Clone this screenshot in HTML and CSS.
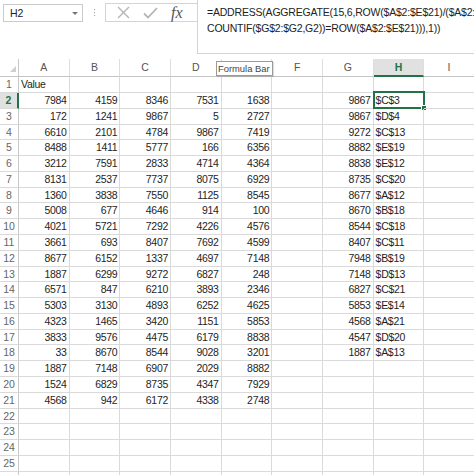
FILE: index.html
```html
<!DOCTYPE html>
<html>
<head>
<meta charset="utf-8">
<link rel="stylesheet" href="styles.css">
</head>
<body>
<div class="toolbar">
  <div class="namebox"><span>H2</span><span class="nb-arrow"></span></div>
  <div class="dots"><i></i><i></i><i></i></div>
  <div class="fxbox">
    <svg class="ic-x" width="13" height="13" viewBox="0 0 13 13"><path d="M1 1 L12 12 M12 1 L1 12" stroke="#b4b4b4" stroke-width="1.4" fill="none"/></svg>
    <svg class="ic-check" width="15" height="12" viewBox="0 0 15 12"><path d="M1 6.5 L5 10.5 L14 1" stroke="#b4b4b4" stroke-width="1.8" fill="none"/></svg>
    <span class="fx">fx</span>
  </div>
  <div class="formula"><span class="fl">=ADDRESS(AGGREGATE(15,6,ROW($A$2:$E$21)/($A$2:$</span><br><span class="fl">COUNTIF($G$2:$G2,G2))=ROW($A$2:$E$21))),1))</span></div>
</div>
<div class="sheet">
  <div class="row hdr"><span class="corner"><i></i></span><span>A</span><span>B</span><span>C</span><span>D</span><span></span><span>F</span><span>G</span><span class="hsel">H</span><span>I</span></div>
  <div class="row"><span class="rh">1</span><span class="t">Value</span><span></span><span></span><span></span><span></span><span></span><span></span><span></span><span></span></div>
  <div class="row"><span class="rh rsel">2</span><span>7984</span><span>4159</span><span>8346</span><span>7531</span><span>1638</span><span></span><span>9867</span><span class="t">$C$3<i class="active"><b></b></i></span><span></span></div>
  <div class="row"><span class="rh">3</span><span>172</span><span>1241</span><span>9867</span><span>5</span><span>2727</span><span></span><span>9867</span><span class="t">$D$4</span><span></span></div>
  <div class="row"><span class="rh">4</span><span>6610</span><span>2101</span><span>4784</span><span>9867</span><span>7419</span><span></span><span>9272</span><span class="t">$C$13</span><span></span></div>
  <div class="row"><span class="rh">5</span><span>8488</span><span>1411</span><span>5777</span><span>166</span><span>6356</span><span></span><span>8882</span><span class="t">$E$19</span><span></span></div>
  <div class="row"><span class="rh">6</span><span>3212</span><span>7591</span><span>2833</span><span>4714</span><span>4364</span><span></span><span>8838</span><span class="t">$E$12</span><span></span></div>
  <div class="row"><span class="rh">7</span><span>8131</span><span>2537</span><span>7737</span><span>8075</span><span>6929</span><span></span><span>8735</span><span class="t">$C$20</span><span></span></div>
  <div class="row"><span class="rh">8</span><span>1360</span><span>3838</span><span>7550</span><span>1125</span><span>8545</span><span></span><span>8677</span><span class="t">$A$12</span><span></span></div>
  <div class="row"><span class="rh">9</span><span>5008</span><span>677</span><span>4646</span><span>914</span><span>100</span><span></span><span>8670</span><span class="t">$B$18</span><span></span></div>
  <div class="row"><span class="rh">10</span><span>4021</span><span>5721</span><span>7292</span><span>4226</span><span>4576</span><span></span><span>8544</span><span class="t">$C$18</span><span></span></div>
  <div class="row"><span class="rh">11</span><span>3661</span><span>693</span><span>8407</span><span>7692</span><span>4599</span><span></span><span>8407</span><span class="t">$C$11</span><span></span></div>
  <div class="row"><span class="rh">12</span><span>8677</span><span>6152</span><span>1337</span><span>4697</span><span>7148</span><span></span><span>7948</span><span class="t">$B$19</span><span></span></div>
  <div class="row"><span class="rh">13</span><span>1887</span><span>6299</span><span>9272</span><span>6827</span><span>248</span><span></span><span>7148</span><span class="t">$D$13</span><span></span></div>
  <div class="row"><span class="rh">14</span><span>6571</span><span>847</span><span>6210</span><span>3893</span><span>2346</span><span></span><span>6827</span><span class="t">$C$21</span><span></span></div>
  <div class="row"><span class="rh">15</span><span>5303</span><span>3130</span><span>4893</span><span>6252</span><span>4625</span><span></span><span>5853</span><span class="t">$E$14</span><span></span></div>
  <div class="row"><span class="rh">16</span><span>4323</span><span>1465</span><span>3420</span><span>1151</span><span>5853</span><span></span><span>4568</span><span class="t">$A$21</span><span></span></div>
  <div class="row"><span class="rh">17</span><span>3833</span><span>9576</span><span>4475</span><span>6179</span><span>8838</span><span></span><span>4547</span><span class="t">$D$20</span><span></span></div>
  <div class="row"><span class="rh">18</span><span>33</span><span>8670</span><span>8544</span><span>9028</span><span>3201</span><span></span><span>1887</span><span class="t">$A$13</span><span></span></div>
  <div class="row"><span class="rh">19</span><span>1887</span><span>7148</span><span>6907</span><span>2029</span><span>8882</span><span></span><span></span><span></span><span></span></div>
  <div class="row"><span class="rh">20</span><span>1524</span><span>6829</span><span>8735</span><span>4347</span><span>7929</span><span></span><span></span><span></span><span></span></div>
  <div class="row"><span class="rh">21</span><span>4568</span><span>942</span><span>6172</span><span>4338</span><span>2748</span><span></span><span></span><span></span><span></span></div>
  <div class="row"><span class="rh">22</span><span></span><span></span><span></span><span></span><span></span><span></span><span></span><span></span><span></span></div>
  <div class="row"><span class="rh">23</span><span></span><span></span><span></span><span></span><span></span><span></span><span></span><span></span><span></span></div>
  <div class="row"><span class="rh">24</span><span></span><span></span><span></span><span></span><span></span><span></span><span></span><span></span><span></span></div>
  <div class="row"><span class="rh">25</span><span></span><span></span><span></span><span></span><span></span><span></span><span></span><span></span><span></span></div>
  <div class="row"><span class="rh"></span><span></span><span></span><span></span><span></span><span></span><span></span><span></span><span></span><span></span></div>
  <div class="tooltip">Formula Bar</div>
</div>
</body>
</html>
```

FILE: styles.css
```css
* { box-sizing: border-box; }
body {
  margin: 0;
  background: #fff;
  font-family: "Liberation Sans", Arial, sans-serif;
  color: #222;
  overflow: hidden;
}
.toolbar {
  display: flex;
  align-items: flex-start;
  height: 54px;
}
.namebox {
  margin: 4px 0 0 3px;
  width: 80px;
  height: 18px;
  border: 1px solid #cacaca;
  display: flex;
  align-items: center;
  justify-content: space-between;
  padding: 0 4px 0 6px;
  font-size: 10.5px;
  color: #222;
}
.nb-arrow {
  width: 0;
  height: 0;
  border-left: 3px solid transparent;
  border-right: 3px solid transparent;
  border-top: 3px solid #777;
}
.dots {
  width: 22px;
  display: flex;
  flex-direction: column;
  align-items: center;
  gap: 2px;
  padding-top: 9px;
}
.dots i {
  display: block;
  width: 1px;
  height: 1px;
  background: #a0a0a0;
}
.fxbox {
  margin-top: 3px;
  width: 92px;
  height: 19px;
  border: 1px solid #d4d4d4;
  border-right: 0;
  display: flex;
  align-items: center;
  padding-left: 11px;
}
.ic-check { margin-left: 13px; }
.fx {
  margin-left: 13px;
  font-family: "Liberation Serif", "Times New Roman", serif;
  font-style: italic;
  font-size: 16px;
  color: #555;
  line-height: 17px;
}
.formula {
  flex: 1;
  min-width: 0;
  height: 54px;
  border-left: 1px solid #d4d4d4;
  border-bottom: 1px solid #d4d4d4;
  padding: 4px 0 0 9px;
  font-size: 10.5px;
  letter-spacing: -0.2px;
  line-height: 16px;
  white-space: nowrap;
  overflow: hidden;
  color: #222;
}
.sheet {
  position: relative;
  margin-top: 5px;
}
.row {
  display: grid;
  grid-template-columns: 19px repeat(9, 50.67px);
  height: 15.79px;
}
.row > span {
  position: relative;
  border-right: 1px solid #dadada;
  border-bottom: 1px solid #dadada;
  font-size: 10.5px;
  letter-spacing: -0.3px;
  line-height: 14.79px;
  text-align: right;
  padding: 0 2px;
  white-space: nowrap;
  color: #1e1e1e;
}
.row > span.t { text-align: left; }
.row > span.rh {
  text-align: center;
  padding: 0;
  letter-spacing: 0;
  color: #666;
  border-right-color: #c8c8c8;
}
.row > span.rsel {
  background: #e1e1e1;
  color: #217346;
  font-weight: bold;
  border-right: 2px solid #217346;
}
.hdr { height: 18.2px; }
.hdr > span {
  text-align: center;
  line-height: 17.2px;
  color: #555;
  letter-spacing: 0;
  border-bottom-color: #c4c4c4;
  border-right-color: #dedede;
}
.hdr > span.corner { border-right-color: #c8c8c8; }
.corner i {
  position: absolute;
  right: 2px;
  bottom: 4px;
  width: 0;
  height: 0;
  border-left: 6px solid transparent;
  border-bottom: 6px solid #cfcfcf;
}
.hdr > span.hsel {
  background: #e1e1e1;
  color: #217346;
  font-weight: bold;
  border-bottom: 2px solid #217346;
  line-height: 16.2px;
}
.active {
  position: absolute;
  left: -1px;
  top: -2px;
  right: -2px;
  bottom: -1px;
  border: 2px solid #217346;
}
.active b {
  position: absolute;
  right: -4px;
  bottom: -4px;
  width: 6px;
  height: 6px;
  background: #217346;
  border: 1px solid #fff;
}
.tooltip {
  position: absolute;
  left: 216px;
  top: 2px;
  width: 57px;
  height: 15px;
  border: 1px solid #9a9a9a;
  background: #fff;
  font-size: 9.4px;
  line-height: 13px;
  padding: 0 1px;
  color: #444;
  white-space: nowrap;
  box-shadow: 1px 1px 1px rgba(0,0,0,0.12);
}
```
